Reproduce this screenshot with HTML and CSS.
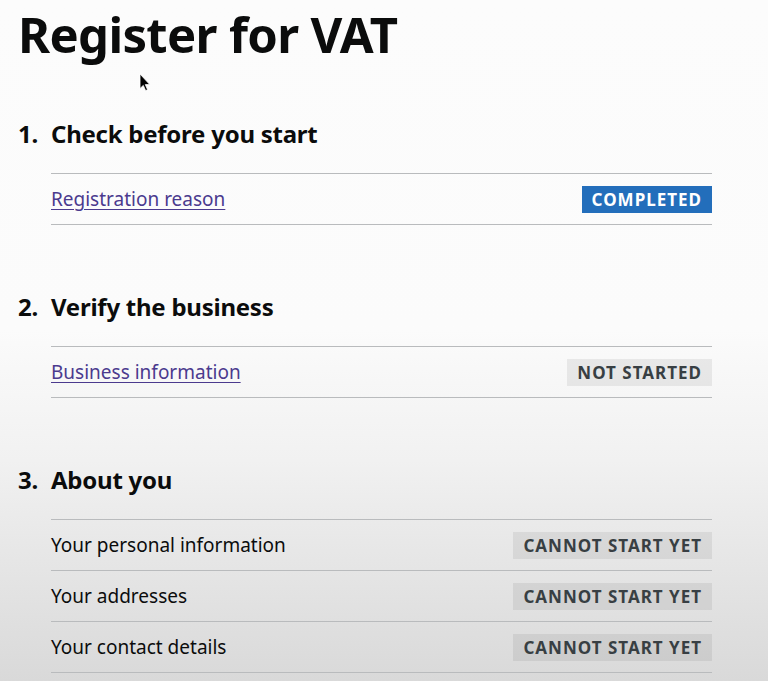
FILE: index.html
```html
<!DOCTYPE html>
<html lang="en">
<head>
<meta charset="utf-8">
<title>Register for VAT</title>
<link rel="stylesheet" href="styles.css">
</head>
<body>
<main class="page">
  <h1 class="title">Register for VAT</h1>

  <section class="section">
    <h2 class="section-heading"><span class="num">1.</span><span>Check before you start</span></h2>
    <ul class="tasks">
      <li class="task"><a class="task-link" href="#">Registration reason</a><strong class="tag tag-blue">Completed</strong></li>
    </ul>
  </section>

  <section class="section">
    <h2 class="section-heading"><span class="num">2.</span><span>Verify the business</span></h2>
    <ul class="tasks">
      <li class="task"><a class="task-link" href="#">Business information</a><strong class="tag tag-grey">Not started</strong></li>
    </ul>
  </section>

  <section class="section">
    <h2 class="section-heading"><span class="num">3.</span><span>About you</span></h2>
    <ul class="tasks">
      <li class="task"><span class="task-name">Your personal information</span><strong class="tag tag-grey">Cannot start yet</strong></li>
      <li class="task"><span class="task-name">Your addresses</span><strong class="tag tag-grey">Cannot start yet</strong></li>
      <li class="task"><span class="task-name">Your contact details</span><strong class="tag tag-grey">Cannot start yet</strong></li>
    </ul>
  </section>

  <svg class="cursor" width="12" height="19" viewBox="0 0 12 19" aria-hidden="true">
    <path d="M1 1 L1 15.5 L4.3 12.4 L6.6 17.6 L8.6 16.7 L6.3 11.6 L10.8 11.6 Z" fill="#000" stroke="#fff" stroke-width="0.8" stroke-linejoin="round"/>
  </svg>
</main>
</body>
</html>
```

FILE: styles.css
```css
html {
  min-height: 681px;
  background: linear-gradient(to bottom, #fcfcfc 0, #fbfbfb 330px, #f1f1f1 460px, #e6e6e6 560px, #d9d9d9 681px);
}

body {
  margin: 0;
  font-family: "Noto Sans", "DejaVu Sans", sans-serif;
  color: #0b0c0c;
}

.page {
  position: relative;
  width: 694px;
  padding: 7px 0 0 18px;
}

.title {
  margin: 0 0 58px;
  font-size: 49px;
  line-height: 54px;
  font-weight: 700;
  letter-spacing: -0.65px;
}

.section {
  margin-bottom: 67px;
}

.section:last-of-type {
  margin-bottom: 0;
}

.section-heading {
  display: flex;
  margin: 0 0 24px;
  font-size: 24px;
  line-height: 30px;
  font-weight: 700;
  letter-spacing: -0.25px;
}

.num {
  width: 33px;
  flex: none;
}

.tasks {
  list-style: none;
  margin: 0 0 0 33px;
  padding: 0;
  border-top: 1px solid #b9bbbd;
}

.task {
  display: flex;
  align-items: center;
  justify-content: space-between;
  height: 50px;
  border-bottom: 1px solid #b9bbbd;
  font-size: 19px;
  line-height: 25px;
}

.task-link {
  color: #4b3a8e;
  text-decoration: underline;
  text-underline-offset: 3px;
  text-decoration-thickness: 1px;
}

.task-name {
  color: #0b0c0c;
}

.tag {
  display: inline-block;
  padding: 4px 10px 4px 10px;
  font-size: 17px;
  line-height: 19px;
  font-weight: 700;
  letter-spacing: 1px;
  text-transform: uppercase;
}

.tag-blue {
  background: #236ebb;
  color: #fff;
}

.tag-grey {
  background: rgba(0, 0, 0, 0.065);
  color: #383f43;
}

.cursor {
  position: absolute;
  left: 139px;
  top: 73px;
}
```
